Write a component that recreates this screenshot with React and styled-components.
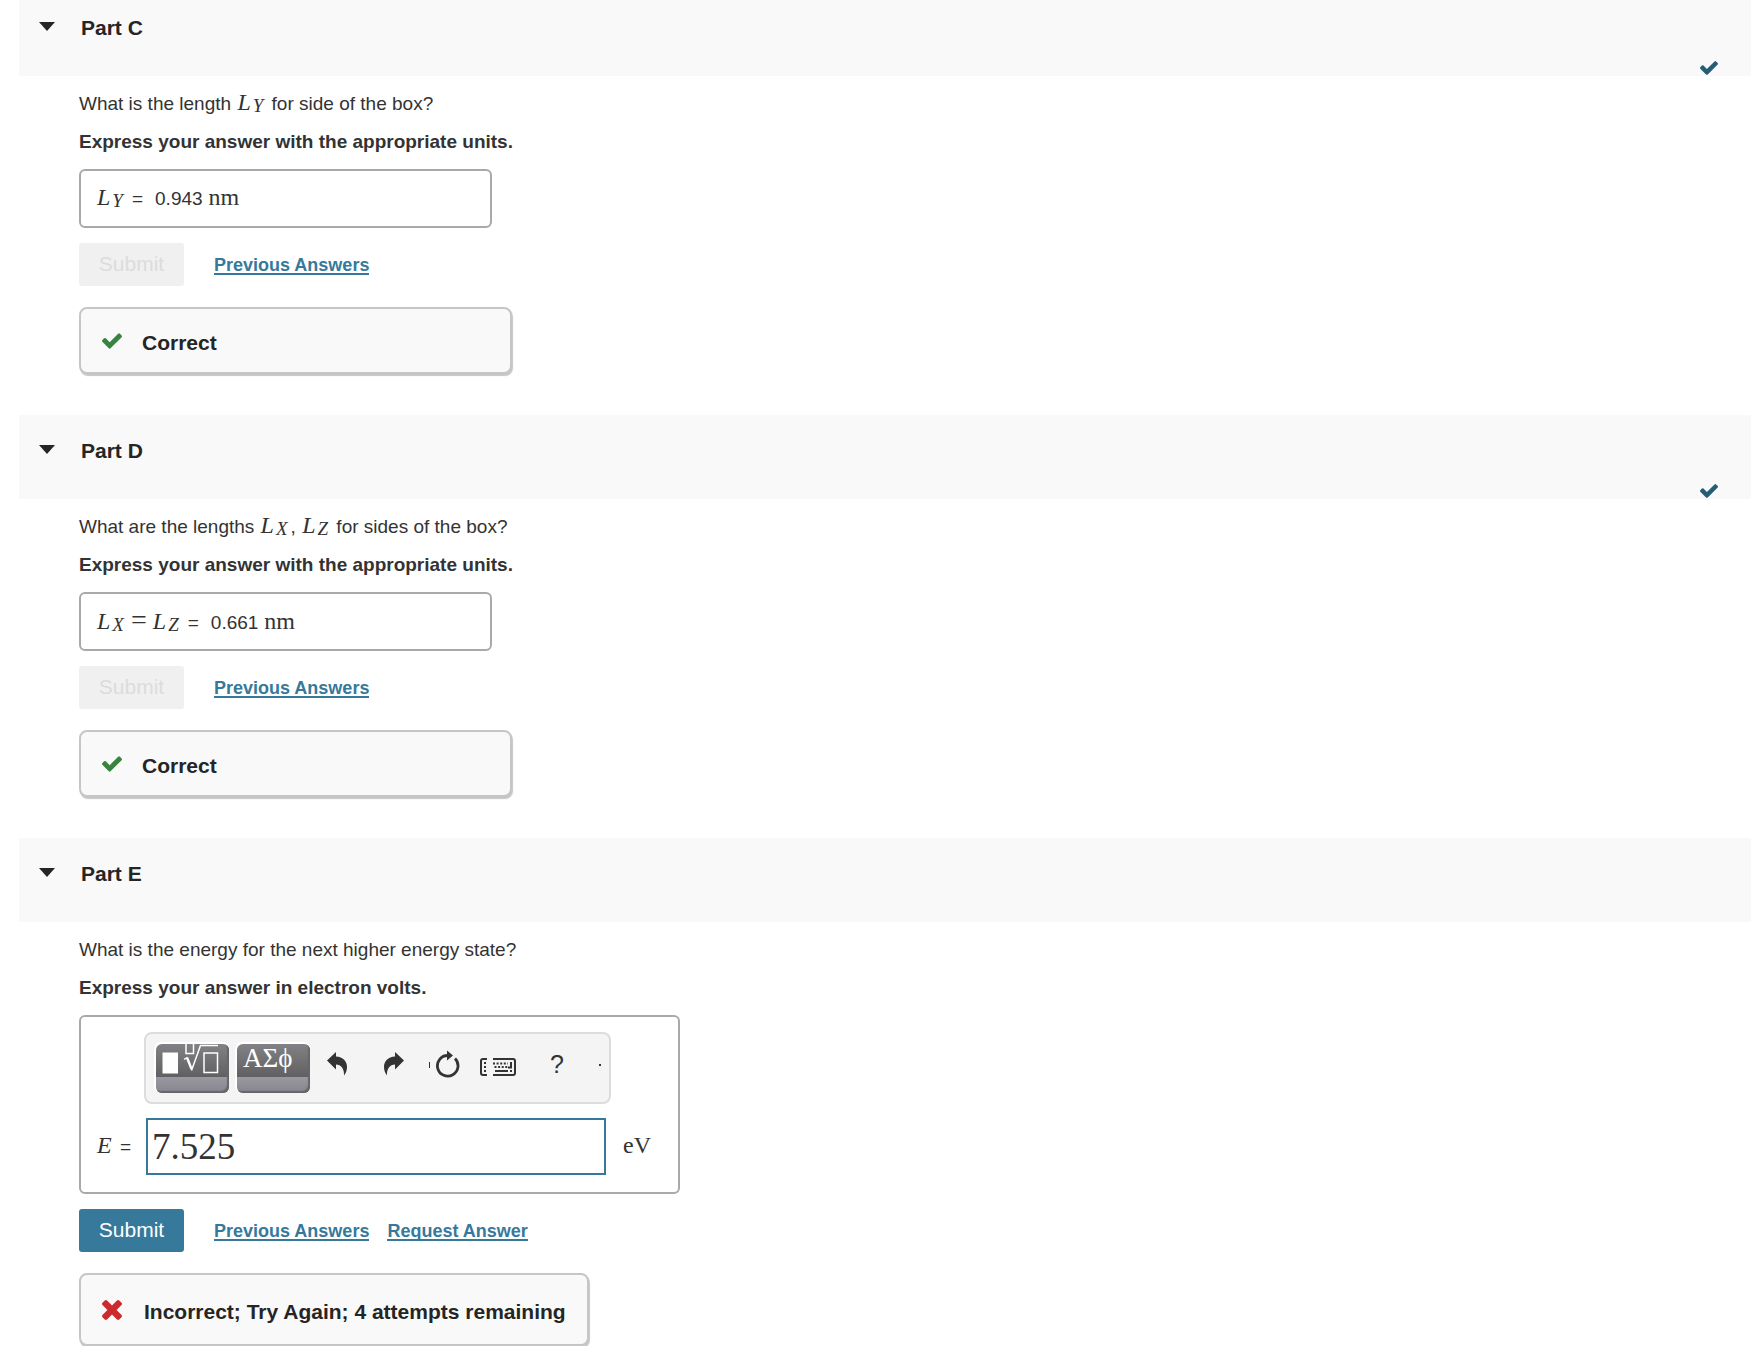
import styled, { createGlobalStyle } from 'styled-components'

const CHECK = 'M1671 566q0 40-28 68l-724 724-136 136q-28 28-68 28t-68-28l-136-136-362-362q-28-28-28-68t28-68l136-136q28-28 68-28t68 28l294 295 656-657q28-28 68-28t68 28l136 136q28 28 28 68z'
const CROSS = 'M1490 1322q0 40-28 68l-136 136q-28 28-68 28t-68-28l-294-294-294 294q-28 28-68 28t-68-28l-136-136q-28-28-28-68t28-68l294-294-294-294q-28-28-28-68t28-68l136-136q28-28 68-28t68 28l294 294 294-294q28-28 68-28t68 28l136 136q28 28 28 68t-28 68l-294 294 294 294q28 28 28 68z'

const CheckIcon = ({ width, height, color }) => (
    <svg width={width} height={height} viewBox="121 338 1550 1184" fill={color} aria-hidden="true">
        <path d={CHECK} />
    </svg>
)

const CrossIcon = () => (
    <svg width="20" height="20" viewBox="302 366 1188 1188" fill="#cd2a2e" aria-hidden="true">
        <path d={CROSS} />
    </svg>
)

const Sym = ({ base, sub }) => (
    <Var>{base}{sub && <i>{sub}</i>}</Var>
)

const Part = ({ name, done, question, instruction, children }) => (
    <section>
        <PartHeader>
            <Toggle aria-label={`Toggle ${name}`}>
                <svg width="16" height="9" viewBox="0 0 16 9" fill="#252525"><path d="M0 0h16L8 9z" /></svg>
            </Toggle>
            <h2>{name}</h2>
            {done && <Done><CheckIcon width={18} height={14} color="#255c77" /></Done>}
        </PartHeader>
        <PartBody>
            <Question>{question}</Question>
            <Instruction>{instruction}</Instruction>
            {children}
        </PartBody>
    </section>
)

const Actions = ({ disabled, request }) => (
    <ActionRow>
        <Submit disabled={disabled}>Submit</Submit>
        <Links>
            <a href="#previous">Previous Answers</a>
            {request && <a href="#request">Request Answer</a>}
        </Links>
    </ActionRow>
)

const Correct = () => (
    <Feedback>
        <CheckIcon width={20} height={16} color="#38843f" />
        <span>Correct</span>
    </Feedback>
)

const MathToolbar = () => (
    <Toolbar>
        <PaletteButton aria-label="Templates">
            <svg width="64" height="33" viewBox="0 0 64 33" fill="none" stroke="#fff" strokeWidth="1.5">
                <path d="M6.5 8.5h15.500v21H6.500z" fill="#fff" stroke="none" />
                <path d="M30 0v9.500h7.500V0" />
                <path d="M28 15.500l3-2" />
                <path d="M31 13.500l4.500 11.500" strokeWidth="2.400" />
                <path d="M35.500 26.500L44.500 1.500H62" />
                <path d="M48 9h13.500v19.500H48z" />
            </svg>
        </PaletteButton>
        <PaletteButton aria-label="Greek letters">ΑΣϕ</PaletteButton>
        <ToolButtons>
            <ToolButton aria-label="Undo">
                <svg width="20" height="24" viewBox="0 0 20 24" fill="#333">
                    <path d="M0 8.500L9 0V4.500C16 5 20 9 20 15C20 18 19 21 17 23.500C17.500 17 14 12.500 9 12.500V17.500z" />
                </svg>
            </ToolButton>
            <ToolButton aria-label="Redo">
                <svg width="20" height="24" viewBox="0 0 20 24" fill="#333">
                    <path d="M20 8.500L11 0V4.500C4 5 0 9 0 15C0 18 1 21 3 23.500C2.500 17 6 12.500 11 12.500V17.500z" />
                </svg>
            </ToolButton>
            <ToolButton aria-label="Reset">
                <svg width="32" height="28" viewBox="0 0 32 28" fill="none" stroke="#333">
                    <path d="M1.500 12v6" strokeWidth="1" />
                    <path d="M20 5.500A10.300 10.300 0 1 0 27 8.500" strokeWidth="2.800" />
                    <path d="M19 0.500L25 5.500L19 10.500z" fill="#333" stroke="none" />
                </svg>
            </ToolButton>
            <ToolButton aria-label="Keyboard shortcuts">
                <svg width="36" height="24" viewBox="0 -6 36 24" fill="none" stroke="#333" strokeWidth="2">
                    <path d="M7 1H3Q1 1 1 3V15Q1 17 3 17H7" />
                    <path d="M13 1H33Q35 1 35 3V15Q35 17 33 17H13" />
                    <path d="M4 5h2M4 9h2M4 13h2" />
                    <path d="M13 5.500h15M14.500 9h13" strokeDasharray="2 1.600" />
                    <path d="M15 13h13M30 13h2" />
                    <path d="M31 4v5.500h-3" />
                </svg>
            </ToolButton>
            <ToolButton aria-label="Help">?</ToolButton>
        </ToolButtons>
        <Dot />
    </Toolbar>
)

const App = () => (
    <Page>
        <GlobalStyle />
        <Part
            name="Part C"
            done
            question={<>What is the length <Sym base="L" sub="Y" /> for side of the box?</>}
            instruction="Express your answer with the appropriate units."
        >
            <AnswerBox>
                <Sym base="L" sub="Y" /><Eq>=</Eq><span>0.943</span><Unit>nm</Unit>
            </AnswerBox>
            <Actions disabled />
            <Correct />
        </Part>
        <Part
            name="Part D"
            done
            question={<>What are the lengths <Sym base="L" sub="X" />, <Sym base="L" sub="Z" /> for sides of the box?</>}
            instruction="Express your answer with the appropriate units."
        >
            <AnswerBox>
                <Sym base="L" sub="X" /><Rel>=</Rel><Sym base="L" sub="Z" /><Eq>=</Eq><span>0.661</span><Unit>nm</Unit>
            </AnswerBox>
            <Actions disabled />
            <Correct />
        </Part>
        <Part
            name="Part E"
            question="What is the energy for the next higher energy state?"
            instruction="Express your answer in electron volts."
        >
            <EntryBox>
                <MathToolbar />
                <EntryRow>
                    <label htmlFor="energy"><Sym base="E" /> =</label>
                    <Entry id="energy" type="text" defaultValue="7.525" />
                    <Unit>eV</Unit>
                </EntryRow>
            </EntryBox>
            <Actions request />
            <Feedback $wrong>
                <CrossIcon />
                <span>Incorrect; Try Again; 4 attempts remaining</span>
            </Feedback>
        </Part>
    </Page>
)

const GlobalStyle = createGlobalStyle`
    * {
        box-sizing: border-box;
    }
    body {
        margin: 0;
        background: #fff;
        color: #333;
        font-family: "Liberation Sans", Arial, sans-serif;
        font-size: 19px;
    }
    button {
        font-family: inherit;
        border: 0;
        padding: 0;
        cursor: pointer;
    }
    svg {
        display: block;
        flex: none;
    }
`
const Page = styled.main`
    display: flex;
    flex-direction: column;
    gap: 41px;
    margin: -8px 13px 0 19px;
`
const PartHeader = styled.header`
    display: flex;
    align-items: flex-start;
    height: 84px;
    padding: 24px 33px 0 20px;
    background: #f9f9f9;
    h2 {
        flex: 1;
        margin: 0 0 0 26px;
        font-size: 21px;
        line-height: 24px;
        color: #252525;
    }
`
const Toggle = styled.button`
    padding-top: 6px;
    background: none;
`
const Done = styled.span`
    align-self: flex-end;
    padding-bottom: 1px;
`
const PartBody = styled.div`
    display: flex;
    flex-direction: column;
    align-items: flex-start;
    padding: 15px 0 0 60px;
`
const Question = styled.p`
    margin: 0 0 12px;
    line-height: 26px;
`
const Instruction = styled.p`
    margin: 0 0 14px;
    line-height: 26px;
    font-weight: bold;
`
const Var = styled.var`
    margin: 0 3px 0 1px;
    font-family: "Liberation Serif", "Times New Roman", serif;
    font-size: 24px;
    line-height: 0;
    i {
        margin-left: 2px;
        font-size: 19px;
        vertical-align: -2px;
    }
`
const Unit = styled.span`
    font-family: "Liberation Serif", "Times New Roman", serif;
    font-size: 24px;
    line-height: 26px;
`
const Eq = styled.span`
    margin: 0 12px 0 9px;
`
const Rel = styled(Unit)`
    margin: 0 6px 0 7px;
    font-size: 28px;
`
const AnswerBox = styled.div`
    display: flex;
    align-items: baseline;
    width: 413px;
    height: 59px;
    padding: 13px 16px;
    border: 2px solid #a9a9a9;
    border-radius: 6px;
    line-height: 26px;
    ${Var} {
        margin: 0;
    }
    ${Unit}:last-child {
        margin-left: 6px;
    }
`
const ActionRow = styled.div`
    display: flex;
    align-items: center;
    gap: 30px;
    margin: 15px 0 21px;
`
const Submit = styled.button`
    width: 105px;
    height: 43px;
    padding-bottom: 2px;
    border-radius: 3px;
    background: #36799b;
    color: #fff;
    font-size: 21px;
    &:disabled {
        background: #f0f0f0;
        color: #dcdcdc;
    }
`
const Links = styled.nav`
    display: flex;
    gap: 18px;
    a {
        color: #36799b;
        font-size: 18px;
        font-weight: bold;
        line-height: 20px;
        text-decoration: none;
        border-bottom: 2px solid #36799b;
        height: 20px;
    }
`
const Feedback = styled.div`
    display: flex;
    align-items: center;
    gap: ${({ $wrong }) => ($wrong ? '22px' : '20px')};
    min-width: 433px;
    height: ${({ $wrong }) => ($wrong ? '73px' : '67px')};
    padding: 0 21px;
    border: 2px solid #c6c6c6;
    border-radius: 8px;
    background: #f9f9f9;
    box-shadow: 1px 2px 1px #c6c6c6;
    color: #252525;
    font-size: 21px;
    font-weight: bold;
    span {
        padding-top: 4px;
    }
`
const EntryBox = styled.div`
    display: flex;
    flex-direction: column;
    gap: 14px;
    width: 601px;
    padding: 15px 16px 17px;
    border: 2px solid #a9a9a9;
    border-radius: 6px;
`
const Toolbar = styled.div`
    display: flex;
    align-items: flex-start;
    gap: 8px;
    width: 467px;
    height: 72px;
    margin-left: 47px;
    padding: 10px 8px 10px 10px;
    border: 2px solid #dcdcdc;
    border-radius: 8px;
    background: #f4f4f4;
`
const PaletteButton = styled.button`
    display: flex;
    align-items: flex-start;
    width: 73px;
    height: 49px;
    border-radius: 6px;
    background: linear-gradient(#828286, #606062 33px, #9a99a2 33px, #86858d);
    box-shadow: inset -2px -2px 1px #66666a, -1px -1px 0 1px #fff;
    color: #fff;
    && {
        font-family: "Liberation Serif", "Times New Roman", serif;
        font-size: 27px;
        line-height: 28px;
        padding-left: 6px;
    }
    svg {
        margin-left: -6px;
    }
`
const ToolButtons = styled.div`
    display: flex;
    flex: 1;
    align-items: center;
    height: 40px;
    padding-left: 9px;
`
const ToolButton = styled.button`
    display: flex;
    flex: none;
    justify-content: center;
    background: none;
    color: #333;
    font-size: 25px;
    line-height: 30px;
    & + & {
        margin-left: 37px;
    }
    & + & + & {
        margin-left: 24px;
    }
    & + & + & + & {
        margin-left: 20px;
    }
    & + & + & + & + & {
        margin-left: 34px;
    }
`
const Dot = styled.span`
    width: 2px;
    height: 2px;
    margin-top: 20px;
    background: #333;
`
const EntryRow = styled.div`
    display: flex;
    align-items: center;
    label {
        width: 49px;
    }
    label ${Var} {
        margin-left: 0;
    }
    ${Unit} {
        margin-left: 17px;
        padding-bottom: 4px;
    }
`
const Entry = styled.input`
    width: 460px;
    height: 57px;
    padding: 0 4px;
    border: 2px solid #36799b;
    outline: 0;
    background: #fff;
    color: #333;
    font-family: "Liberation Serif", "Times New Roman", serif;
    font-size: 37px;
`
export default App
